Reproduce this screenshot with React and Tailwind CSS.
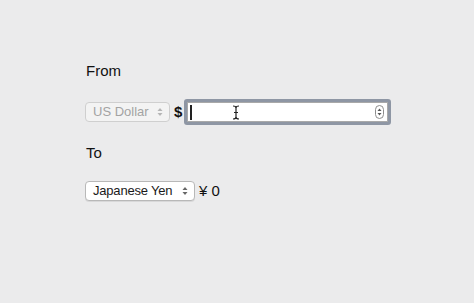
export default function App() {
  const font = { fontFamily: '"Liberation Sans", Arial, sans-serif' };
  const Arrows = ({ color = "#8a8a8a" }) => (
    <svg width="6" height="10" viewBox="0 0 6 10">
      <path d="M0.5 4 L3 1 L5.5 4 Z" fill={color} />
      <path d="M0.5 6 L3 9 L5.5 6 Z" fill={color} />
    </svg>
  );
  return (
    <div className="w-[474px] h-[303px] bg-[#ebebec] text-[#111] pl-[85px] pt-[61px]" style={font}>
      <div className="text-[15px] leading-[20px] pl-[1px]">From</div>
      <div className="flex items-center mt-[18px] h-[26px]">
        <div className="flex items-center justify-between w-[85px] h-[20px] rounded-[4px] border border-[#cfcfcf] bg-[#f3f3f3] pl-[7px] pr-[6px] text-[13px] text-[#a3a3a3]">
          <span>US Dollar</span>
          <Arrows color="#b5b5b5" />
        </div>
        <span className="ml-[4px] text-[15px] font-bold">$</span>
        <div className="ml-[2px] relative w-[207px] h-[26px] rounded-[3px] border-[3px] border-[#8e96a4] p-0">
          <div className="w-full h-full bg-white border border-[#a9a9a9] flex items-center justify-between pl-[2px] pr-[3px]">
            <div className="w-[2px] h-[15px] bg-[#222]" />
            <div className="w-[9px] h-[14px] rounded-full border border-[#8d8d8d] flex items-center justify-center">
              <svg width="5" height="8" viewBox="0 0 5 8">
                <path d="M0.5 3 L2.5 0.5 L4.5 3 Z" fill="#555" />
                <path d="M0.5 5 L2.5 7.5 L4.5 5 Z" fill="#555" />
              </svg>
            </div>
          </div>
          <svg className="absolute left-[45px] top-[3px]" width="8" height="15" viewBox="0 0 8 15">
            <path d="M1 1 Q4 1 4 3 L4 12 Q4 14 1 14 M7 1 Q4 1 4 3 M4 12 Q4 14 7 14 M2 7.5 L6 7.5" stroke="#222" strokeWidth="1.2" fill="none" />
          </svg>
        </div>
      </div>
      <div className="text-[15px] leading-[20px] mt-[18px] pl-[1px]">To</div>
      <div className="flex items-center mt-[17px] h-[22px]">
        <div className="flex items-center justify-between w-[110px] h-[20px] rounded-[4px] border border-[#b8b8b8] bg-white pl-[7px] pr-[6px] text-[13px] text-[#1a1a1a] shadow-[0_1px_0_rgba(0,0,0,0.08)]">
          <span className="tracking-[-0.2px]">Japanese Yen</span>
          <Arrows color="#666" />
        </div>
        <span className="ml-[4px] text-[15px]">¥ 0</span>
      </div>
    </div>
  );
}
